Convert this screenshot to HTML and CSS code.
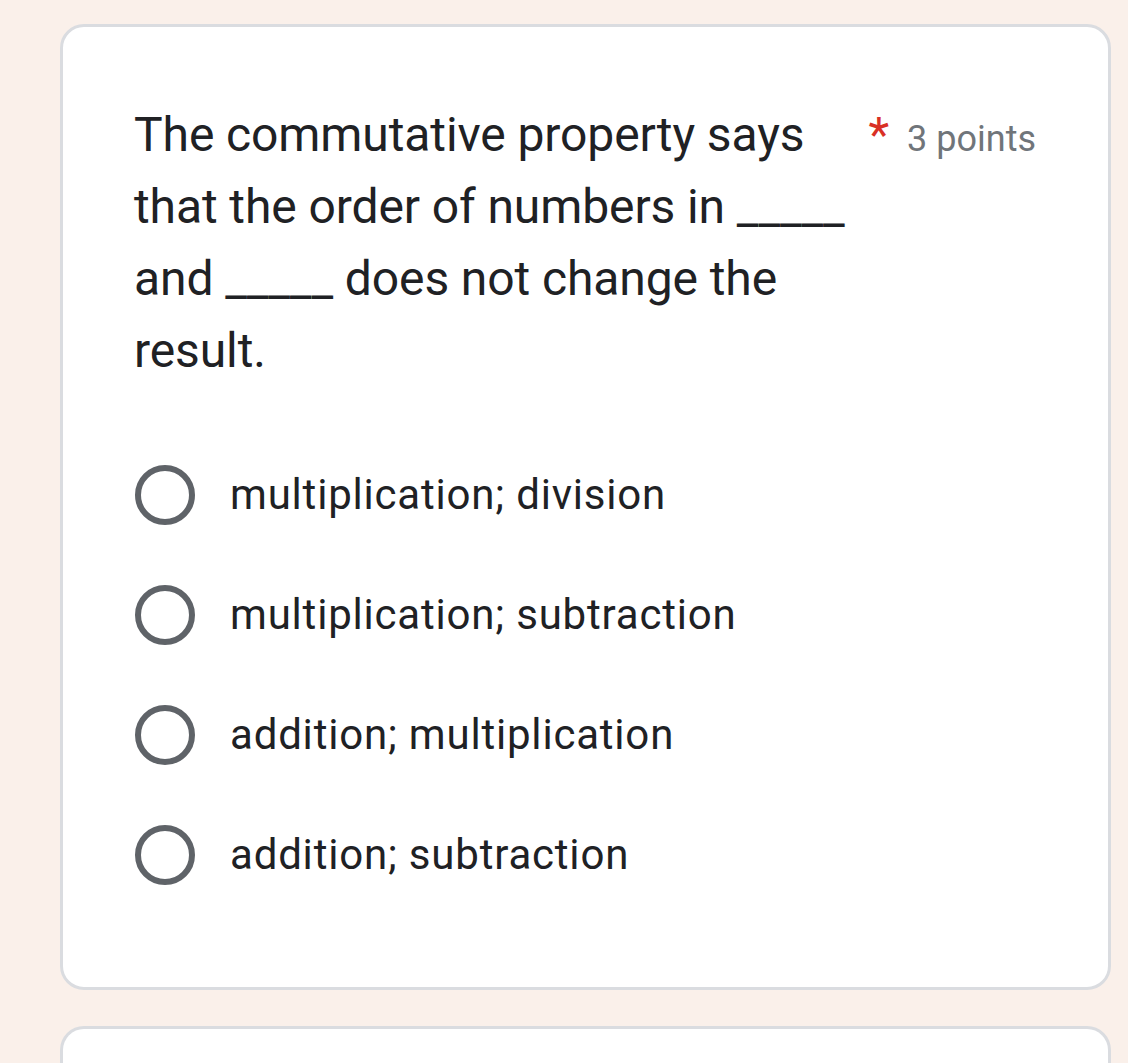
FILE: index.html
```html
<!DOCTYPE html>
<html lang="en">
<head>
<meta charset="utf-8">
<title>Question</title>
<link rel="stylesheet" href="styles.css">
</head>
<body>
<main class="page">
  <section class="card">
    <div class="head">
      <div class="title">The commutative property says that the order of numbers in _____ and _____ does not change the result.</div>
      <span class="req">*</span>
      <span class="points">3 points</span>
    </div>
    <div class="options">
      <label class="option"><span class="radio"></span><span class="opt-text">multiplication; division</span></label>
      <label class="option"><span class="radio"></span><span class="opt-text">multiplication; subtraction</span></label>
      <label class="option"><span class="radio"></span><span class="opt-text">addition; multiplication</span></label>
      <label class="option"><span class="radio"></span><span class="opt-text">addition; subtraction</span></label>
    </div>
  </section>
  <section class="card card-next"></section>
</main>
</body>
</html>
```
FILE: styles.css
```css
html, body {
  margin: 0;
  padding: 0;
  background: #faf0ea;
  font-family: Roboto, "Liberation Sans", Arial, sans-serif;
  overflow: hidden;
}
.page {
  padding: 24px 17px 0 60px;
  display: flex;
  flex-direction: column;
  gap: 36px;
}
.card {
  background: #fff;
  border: 3px solid #dadce0;
  border-radius: 24px;
  padding: 72px;
}
.card-next {
  height: 0;
  padding-bottom: 0;
  border-bottom: 0;
  border-radius: 24px 24px 0 0;
  padding-top: 34px;
}
.head {
  display: flex;
  align-items: baseline;
}
.title {
  flex: 1 1 auto;
  font-size: 48px;
  line-height: 72px;
  color: #202124;
  letter-spacing: -0.1px;
  padding-left: 0;
  margin-left: -1px;
}
.req {
  color: #d93025;
  font-size: 48px;
  line-height: 72px;
  margin-right: 18px;
}
.points {
  color: #70757a;
  font-size: 36px;
  line-height: 72px;
  white-space: nowrap;
}
.options {
  margin-top: 48px;
  display: flex;
  flex-direction: column;
}
.option {
  height: 120px;
  display: flex;
  align-items: center;
}
.radio {
  width: 60px;
  height: 60px;
  box-sizing: border-box;
  border: 6px solid #5f6368;
  border-radius: 50%;
  flex: none;
}
.opt-text {
  margin-left: 35px;
  font-size: 42px;
  line-height: 60px;
  color: #202124;
  letter-spacing: 0.8px;
}
```
